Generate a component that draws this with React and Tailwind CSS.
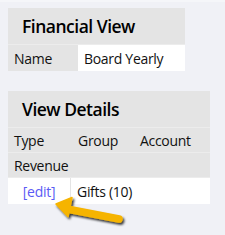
import React from "react";

const font = { fontFamily: '"Open Sans", "Noto Sans", sans-serif' };

function Arrow() {
  return (
    <svg className="absolute left-0 top-0 pointer-events-none" width="225" height="235" viewBox="0 0 225 235">
      <defs>
        <filter id="shadow" x="-20%" y="-40%" width="140%" height="180%">
          <feDropShadow dx="1.5" dy="2" stdDeviation="1.2" floodColor="#000" floodOpacity="0.8" />
        </filter>
      </defs>
      <g filter="url(#shadow)" fill="#f6b400" stroke="#f6b400">
        <line x1="67" y1="207" x2="119" y2="217" strokeWidth="7.5" strokeLinecap="round" />
        <polygon points="56,202 72,195.5 68,214.5" strokeWidth="1.5" strokeLinejoin="round" />
      </g>
    </svg>
  );
}

export default function App() {
  return (
    <div className="relative min-h-[235px] bg-[#f0f1f6] border-t-2 border-[#f5f6f9] px-2 pt-[6px] text-[14px] tracking-[-0.3px] text-[#111]" style={font}>
      {/* Financial View */}
      <div className="w-[177px]">
        <div className="h-[36px] bg-[#e4e4e4] pl-[14px] flex items-center text-[17.5px] tracking-[-0.5px] font-semibold text-black">
          Financial View
        </div>
        <div className="grid grid-cols-[70px_1fr] h-[27px] border-t border-[#ececec]">
          <div className="bg-[#e4e4e4] pl-[6px] flex items-center">Name</div>
          <div className="bg-white pl-[6px] flex items-center">Board Yearly</div>
        </div>
      </div>

      {/* View Details */}
      <div className="w-[202px] mt-[20px]">
        <div className="h-[36px] bg-[#e4e4e4] pl-[14px] flex items-center text-[17.5px] tracking-[-0.5px] font-semibold text-black">
          View Details
        </div>
        <div className="grid grid-cols-[63px_62px_1fr] h-[25px] bg-[#e4e4e4] border-t border-[#ececec]">
          <div className="pl-[6px] flex items-center">Type</div>
          <div className="pl-[7px] flex items-center">Group</div>
          <div className="pl-[7px] flex items-center">Account</div>
        </div>
        <div className="h-[25px] bg-[#e4e4e4] border-t border-[#ececec] pl-[6px] flex items-center">
          Revenue
        </div>
        <div className="grid grid-cols-[63px_1fr] h-[27px] bg-white border-t border-[#ececec]">
          <div className="flex items-center justify-center border-r border-[#e4e4e4]">
            <a className="text-[#5b5bf5]">[edit]</a>
          </div>
          <div className="pl-[6px] flex items-center">Gifts (10)</div>
        </div>
      </div>

      <Arrow />
    </div>
  );
}
